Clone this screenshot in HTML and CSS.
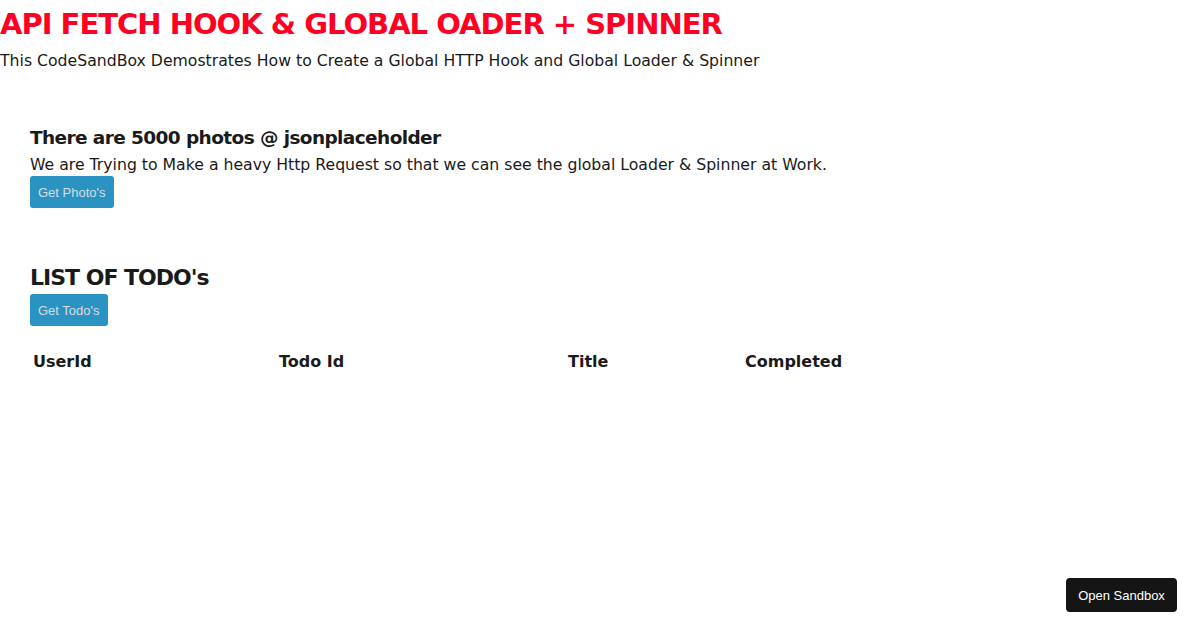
FILE: index.html
```html
<!DOCTYPE html>
<html>
<head>
<meta charset="utf-8">
<link rel="stylesheet" href="styles.css">
</head>
<body>
<h1 class="title">API FETCH HOOK &amp; GLOBAL OADER + SPINNER</h1>
<p class="subtitle">This CodeSandBox Demostrates How to Create a Global HTTP Hook and Global Loader &amp; Spinner</p>
<div class="content">
  <section class="photos">
    <h3 class="photos-heading">There are 5000 photos @ jsonplaceholder</h3>
    <p class="photos-text">We are Trying to Make a heavy Http Request so that we can see the global Loader &amp; Spinner at Work.</p>
    <button class="btn">Get Photo's</button>
  </section>
  <section class="todos">
    <h2 class="todos-heading">LIST OF TODO's</h2>
    <button class="btn">Get Todo's</button>
    <table class="todo-table">
      <thead>
        <tr>
          <th class="col-user">UserId</th>
          <th class="col-id">Todo Id</th>
          <th class="col-title">Title</th>
          <th class="col-done">Completed</th>
        </tr>
      </thead>
    </table>
  </section>
</div>
<a class="open-sandbox">Open Sandbox</a>
</body>
</html>
```
FILE: styles.css
```css
html, body {
  margin: 0;
  padding: 0;
  background: #fff;
}
body {
  font-family: "DejaVu Sans", sans-serif;
  color: #1a1a1a;
}
.title {
  margin: 0;
  padding-top: 4px;
  font-size: 29px;
  letter-spacing: -1px;
  line-height: 40px;
  font-weight: 700;
  color: #ff0022;
}
.subtitle {
  margin: 5px 0 0 0;
  font-size: 15.7px;
  line-height: 24px;
}
.content {
  padding: 51px 30px 0 30px;
}
.photos-heading {
  margin: 0;
  font-size: 18.5px;
  letter-spacing: -0.6px;
  line-height: 28px;
  font-weight: 700;
}
.photos-text {
  margin: 0;
  padding-top: 1px;
  font-size: 15.7px;
  line-height: 23px;
}
.btn {
  display: block;
  margin: 0;
  height: 32px;
  padding: 0 8px;
  border: none;
  border-radius: 3px;
  background: #2b93c2;
  color: #d6dde3;
  font-family: "Liberation Sans", Arial, sans-serif;
  font-size: 13px;
}
.todos {
  margin-top: 55px;
}
.todos-heading {
  margin: 0 0 1px 0;
  font-size: 22px;
  letter-spacing: -1px;
  line-height: 30px;
  font-weight: 700;
}
.todo-table {
  margin-top: 21px;
  border-collapse: collapse;
}
.todo-table th {
  text-align: left;
  padding: 3px;
  font-size: 16px;
  font-weight: 700;
  line-height: 23px;
}
.col-user { width: 240px; }
.col-id { width: 283px; }
.col-title { width: 171px; }
.col-done { width: 160px; }
.open-sandbox {
  position: fixed;
  right: 23px;
  bottom: 18px;
  width: 111px;
  height: 34px;
  box-sizing: border-box;
  display: flex;
  align-items: center;
  justify-content: center;
  background: #151515;
  color: #fff;
  border-radius: 4px;
  font-family: "Liberation Sans", Arial, sans-serif;
  font-size: 13px;
}
```
